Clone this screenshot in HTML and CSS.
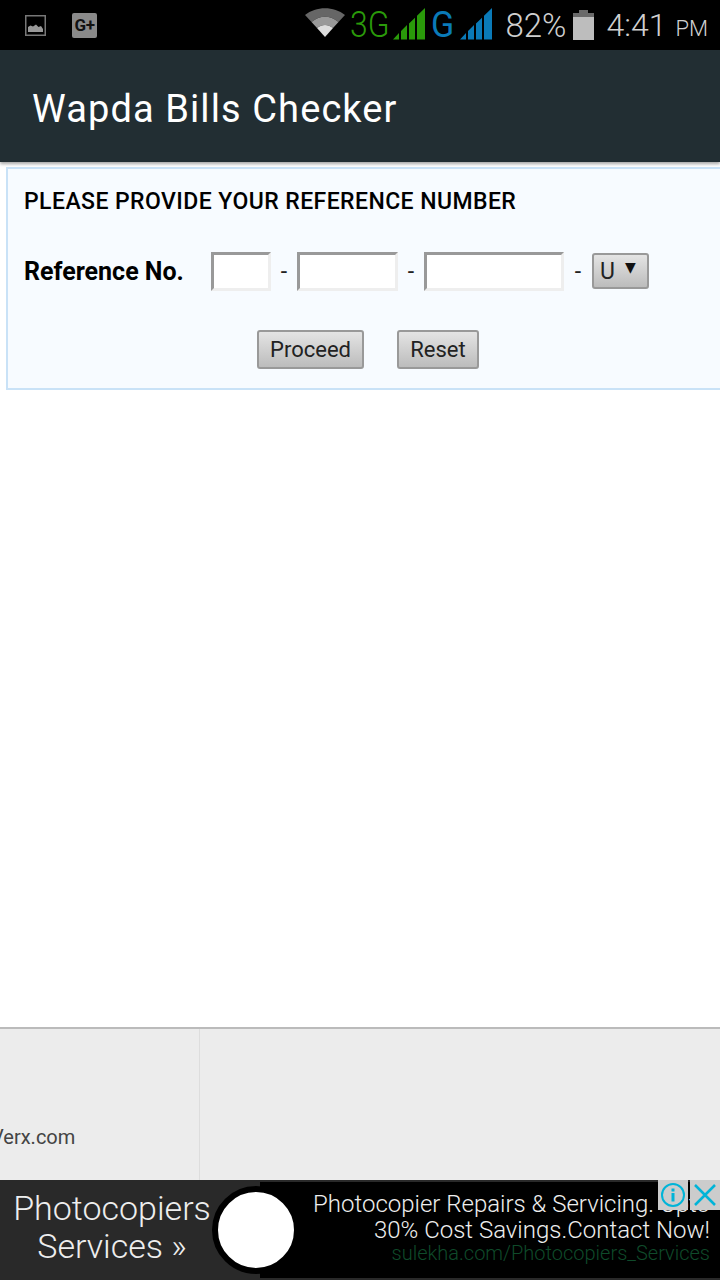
FILE: index.html
```html
<!DOCTYPE html>
<html lang="en">
<head>
<meta charset="utf-8">
<title>Wapda Bills Checker</title>
<link rel="stylesheet" href="styles.css">
</head>
<body>
<div class="screen">
  <div class="statusbar">
    <svg class="ic-image" viewBox="0 0 21 21"><rect x="0.75" y="0.75" width="19.5" height="19.5" fill="none" stroke="#777" stroke-width="1.5"/><path d="M3 17V12L5.5 10.5 8 11.5 11 9.5 13.5 12 16 11 18 14V17Z" fill="#999"/></svg>
    <div class="ic-gplus">G+</div>
    <div class="status-right">
      <svg class="ic-wifi" viewBox="0 0 40 30"><path d="M0 7C11-2 29-2 40 7L33.500 14C25 7 15 7 6.500 14Z" fill="#666"/><path d="M6.500 14C15 7 25 7 33.500 14L28 20C23 16 17 16 12 20Z" fill="#999"/><path d="M12 20C17 16 23 16 28 20L20 29Z" fill="#ddd"/></svg>
      <span class="net net-3g">3G</span>
      <svg class="ic-signal sig-green" viewBox="0 0 32 32"><path d="M0 31.500H6V25ZM8 31.500H14V17L8 23ZM16 31.500H22V9.700L16 15.500ZM24 31.500H32V0L24 7.700Z"/></svg>
      <span class="net net-g">G</span>
      <svg class="ic-signal sig-blue" viewBox="0 0 32 32"><path d="M0 31.500H6V25ZM8 31.500H14V17L8 23ZM16 31.500H22V9.700L16 15.500ZM24 31.500H32V0L24 7.700Z"/></svg>
      <span class="pct">82%</span>
      <svg class="ic-battery" viewBox="0 0 21 30"><path d="M6 0H15V3H21V30H0V3H6Z" fill="#bdbdbd"/><path d="M6 0H15V3H21V7H0V3H6Z" fill="#6a6a6a"/></svg>
      <span class="clock">4:41<small>PM</small></span>
    </div>
  </div>

  <header class="appbar">Wapda Bills Checker</header>

  <main class="content">
    <form class="card">
      <h1 class="card-title">PLEASE PROVIDE YOUR REFERENCE NUMBER</h1>
      <div class="ref-row">
        <label class="ref-label">Reference No.</label>
        <input class="field f1" type="text">
        <span class="dash">-</span>
        <input class="field f2" type="text">
        <span class="dash">-</span>
        <input class="field f3" type="text">
        <span class="dash dash-last">-</span>
        <div class="picker"><span>U</span><span class="arrow">▼</span></div>
      </div>
      <div class="actions">
        <button class="btn btn-proceed" type="button">Proceed</button>
        <button class="btn btn-reset" type="button">Reset</button>
      </div>
    </form>
  </main>

  <footer class="footer">
    <div class="foot-cell"><span class="foot-text">Verx.com</span></div>
    <div class="foot-cell foot-wide"></div>
  </footer>

  <aside class="ad">
    <div class="ad-left">Photocopiers<br>Services »</div>
    <div class="ad-panel">
      <div class="ad-line">Photocopier Repairs &amp; Servicing. Upto</div>
      <div class="ad-line">30% Cost Savings.Contact Now!</div>
      <div class="ad-url">sulekha.com/Photocopiers_Services</div>
    </div>
    <div class="ad-circle"></div>
    <div class="ad-controls">
      <div class="ad-ctl"><svg viewBox="0 0 26 26"><circle cx="13" cy="13" r="11" fill="none" stroke="#00b4d8" stroke-width="2"/><rect x="11.500" y="11" width="3" height="8.500" fill="#00b4d8"/><rect x="11.500" y="6.500" width="3" height="3" fill="#00b4d8"/></svg></div>
      <div class="ad-ctl"><svg viewBox="0 0 26 26"><path d="M3 3 23 23M23 3 3 23" fill="none" stroke="#00b4d8" stroke-width="2.500"/></svg></div>
    </div>
  </aside>
</div>
</body>
</html>
```
FILE: styles.css
```css
* { box-sizing: border-box; }
html, body { margin: 0; padding: 0; background: #fff; }
.screen {
  width: 720px; height: 1280px; overflow: hidden;
  display: flex; flex-direction: column;
  font-family: Roboto, "Liberation Sans", sans-serif;
}

/* status bar */
.statusbar {
  height: 50px; flex: none; background: #000;
  display: flex; align-items: center; padding-left: 25px;
  color: #c8c8c8;
}
.ic-image { width: 21px; height: 21px; margin-top: 1px; }
.ic-gplus {
  width: 25px; height: 25px; margin-left: 26px; border-radius: 2px;
  background: #8a8a8a; color: #111; font-size: 17px; font-weight: 700;
  display: flex; align-items: center; justify-content: center; letter-spacing: -0.5px;
}
.status-right { margin-left: auto; display: flex; align-items: center; height: 50px; padding-right: 12px; }
.ic-wifi { width: 40px; height: 30px; margin-top: -4px; }
.net {
  display: inline-block; font-weight: 300; font-size: 37px; line-height: 50px; margin-top: 0;
  transform-origin: left center; white-space: nowrap;
}
.net-3g { color: #2a9a0a; margin-left: 5px; width: 38px; transform: scaleX(.86); }
.net-g { color: #0a7ab8; margin-left: 6px; width: 23px; font-weight: 400; transform: scaleX(.92); }
.ic-signal { width: 32px; height: 32px; margin-top: -3px; }
.sig-green { fill: #2a9a0a; margin-left: 5px; }
.sig-blue { fill: #0a7ab8; margin-left: 6px; }
.pct { font-size: 33px; font-weight: 300; margin-left: 13px; color: #cfcfcf; }
.ic-battery { width: 21px; height: 30px; margin-left: 7px; margin-top: -1px; }
.clock { font-size: 32px; font-weight: 300; margin-left: 12px; color: #d0d0d0; }
.clock small { font-size: 22px; margin-left: 9px; }

/* app bar */
.appbar {
  height: 112px; flex: none; background: #222e33; color: #fff;
  font-size: 38px; letter-spacing: 1.1px; line-height: 118px; padding-left: 32px;
  box-shadow: 0 2px 3px rgba(0, 0, 0, .35); position: relative;
}

/* main */
.content { flex: 1; background: #fff; padding: 5px 0 0 6px; }
.card {
  width: 730px; height: 223px;
  border: 2px solid #c9e2f7; background: #f7fbff;
  padding: 17px 0 0 16px;
}
.card-title { margin: 0; font-size: 23px; letter-spacing: 0.43px; font-weight: 500; line-height: 32px; color: #000; }
.ref-row { display: flex; align-items: center; height: 39px; margin-top: 34px; }
.ref-label { width: 187px; flex: none; font-size: 25px; font-weight: 700; color: #000; }
.field {
  height: 39px; padding: 0; background: #fff; outline: 0;
  border-style: solid; border-width: 3px;
  border-color: #999 #eee #eee #999;
}
.f1 { width: 60px; }
.f2 { width: 101px; }
.f3 { width: 140px; }
.dash { width: 26px; text-align: center; font-size: 23px; color: #222; }
.dash-last { width: 28px; }
.picker {
  width: 57px; height: 36px; margin-top: -1px;
  display: flex; align-items: center; padding-left: 6px;
  border: 2px solid #999; border-radius: 3px;
  background: linear-gradient(#e4e4e4, #bcbcbc);
  font-size: 23px; color: #222;
}
.arrow { font-family: "DejaVu Sans", sans-serif; font-size: 14px; margin-left: 10px; margin-top: -8px; color: #111; }
.actions { display: flex; gap: 33px; margin-top: 39px; padding-left: 233px; }
.btn {
  height: 39px; padding: 0; font-family: inherit; font-size: 22px; color: #222;
  border: 2px solid #999; border-radius: 3px;
  background: linear-gradient(#e4e4e4, #bcbcbc);
}
.btn-proceed { width: 107px; }
.btn-reset { width: 82px; }

/* footer */
.footer {
  height: 153px; flex: none; background: #ececec;
  border-top: 2px solid #bbb; display: flex;
}
.foot-cell { width: 200px; border-right: 1px solid #ddd; display: flex; align-items: flex-end; padding-bottom: 31px; overflow: hidden; }
.foot-wide { flex: 1; border-right: 0; }
.foot-text { font-size: 20px; color: #444; margin-left: -9px; white-space: nowrap; }

/* ad */
.ad { height: 100px; flex: none; background: #292929; position: relative; display: flex; }
.ad-left {
  width: 224px; flex: none; text-align: center; color: #eee;
  font-size: 34px; font-weight: 300; line-height: 38px; padding-top: 9px;
}
.ad-panel {
  flex: 1; margin: 2px 0 2px 36px; background: #000; text-align: right;
  padding: 9px 10px 0 0; color: #eee; font-weight: 300; white-space: nowrap; overflow: hidden;
}
.ad-line { font-size: 24px; line-height: 26px; }
.ad-url { font-size: 20px; line-height: 21px; color: #0f4a2a; }
.ad-circle {
  position: absolute; left: 212px; top: 6px; width: 88px; height: 88px;
  border-radius: 50%; background: #fff; border: 6px solid #000;
}
.ad-controls { position: absolute; right: 0; top: 0; display: flex; gap: 2px; }
.ad-ctl { width: 30px; height: 30px; background: #ccc; display: flex; align-items: center; justify-content: center; }
.ad-ctl svg { width: 26px; height: 26px; }
```
